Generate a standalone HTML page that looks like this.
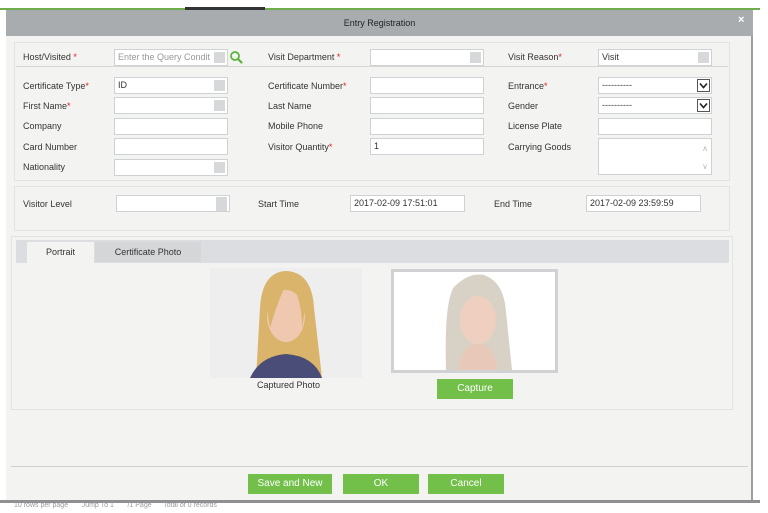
<!DOCTYPE html><html><head><meta charset="utf-8"><style>
*{box-sizing:border-box;margin:0;padding:0}
body{width:768px;height:513px;background:#fff;font-family:"Liberation Sans",sans-serif;font-size:9px;color:#333;position:relative;overflow:hidden}
.a{position:absolute}
.lbl{position:absolute;font-size:9px;color:#333}
.r{color:#e02020}
.in{position:absolute;height:17px;background:#fff;border:1px solid #cfd2d4;font-size:9px;line-height:15px;padding-left:3px}
.dd{position:absolute;right:2px;top:2px;width:11px;height:11px;background:#d6d8da}
.sel .arr{position:absolute;right:1px;top:1px;width:13px;height:13px;border:1px solid #555;background:#fff}
.btn{position:absolute;height:20px;background:#72c04a;color:#fff;font-size:10px;text-align:center;line-height:20px}
</style></head><body>
<div class="a" style="left:0;top:8px;width:760px;height:2px;background:#6fae4c"></div>
<div class="a" style="left:185px;top:7px;width:80px;height:3px;background:#333"></div>
<div class="a" style="left:6px;top:10px;width:747px;height:491px;background:#f3f4f2;border-right:2px solid #9c9ea0"></div>
<div class="a" style="left:6px;top:10px;width:747px;height:26px;background:#a9acaf;color:#222;text-align:center;line-height:26px;font-size:9px">Entry Registration</div>
<div class="a" style="left:738px;top:14px;color:#fff;font-size:11px;font-weight:bold">×</div>
<div class="a" style="left:0;top:500px;width:760px;height:3px;background:#8e9092"></div>
<div class="a" style="left:14px;top:502px;font-size:7px;color:#999">10 rows per page &nbsp;&nbsp;&nbsp;&nbsp;&nbsp; Jump To 1 &nbsp;&nbsp;&nbsp;&nbsp;&nbsp; /1 Page &nbsp;&nbsp;&nbsp;&nbsp; Total of 0 records</div>

<div class="a" style="left:14px;top:42px;width:716px;height:139px;border:1px solid #e3e4e2"></div>
<div class="a" style="left:16px;top:66px;width:712px;height:1px;background:#d5d6d4"></div>
<div class="lbl" style="left:23px;top:52px">Host/Visited <span class="r">*</span></div>
<div class="in" style="left:114px;top:49px;width:114px;color:#999">Enter the Query Condit<div class="dd"></div></div>
<svg class="a" style="left:229px;top:50px" width="14" height="14" viewBox="0 0 14 14"><circle cx="6" cy="6" r="4" fill="none" stroke="#5cb33c" stroke-width="1.8"/><path d="M9 9 L12.5 12.5" stroke="#5cb33c" stroke-width="2.2" stroke-linecap="round"/></svg>
<div class="lbl" style="left:268px;top:52px">Visit Department <span class="r">*</span></div>
<div class="in" style="left:370px;top:49px;width:114px"><div class="dd"></div></div>
<div class="lbl" style="left:508px;top:52px">Visit Reason<span class="r">*</span></div>
<div class="in" style="left:598px;top:49px;width:114px">Visit<div class="dd"></div></div>

<div class="lbl" style="left:23px;top:81px">Certificate Type<span class="r">*</span></div>
<div class="in" style="left:114px;top:77px;width:114px">ID<div class="dd"></div></div>
<div class="lbl" style="left:268px;top:81px">Certificate Number<span class="r">*</span></div>
<div class="in" style="left:370px;top:77px;width:114px"></div>
<div class="lbl" style="left:508px;top:81px">Entrance<span class="r">*</span></div>
<div class="in sel" style="left:598px;top:77px;width:114px">----------<div class="arr"><svg width="11" height="11" viewBox="0 0 11 11"><path d="M2 3.5 L5.5 7.5 L9 3.5" fill="none" stroke="#222" stroke-width="1.6"/></svg></div></div>

<div class="lbl" style="left:23px;top:101px">First Name<span class="r">*</span></div>
<div class="in" style="left:114px;top:97px;width:114px"><div class="dd"></div></div>
<div class="lbl" style="left:268px;top:101px">Last Name</div>
<div class="in" style="left:370px;top:97px;width:114px"></div>
<div class="lbl" style="left:508px;top:101px">Gender</div>
<div class="in sel" style="left:598px;top:97px;width:114px">----------<div class="arr"><svg width="11" height="11" viewBox="0 0 11 11"><path d="M2 3.5 L5.5 7.5 L9 3.5" fill="none" stroke="#222" stroke-width="1.6"/></svg></div></div>

<div class="lbl" style="left:23px;top:121px">Company</div>
<div class="in" style="left:114px;top:118px;width:114px"></div>
<div class="lbl" style="left:268px;top:121px">Mobile Phone</div>
<div class="in" style="left:370px;top:118px;width:114px"></div>
<div class="lbl" style="left:508px;top:121px">License Plate</div>
<div class="in" style="left:598px;top:118px;width:114px"></div>

<div class="lbl" style="left:23px;top:142px">Card Number</div>
<div class="in" style="left:114px;top:138px;width:114px"></div>
<div class="lbl" style="left:268px;top:142px">Visitor Quantity<span class="r">*</span></div>
<div class="in" style="left:370px;top:138px;width:114px">1</div>
<div class="lbl" style="left:508px;top:142px">Carrying Goods</div>
<div class="in" style="left:598px;top:138px;width:114px;height:37px"><div class="a" style="right:3px;top:2px;color:#bbb;font-size:8px">&#8743;</div><div class="a" style="right:3px;top:20px;color:#bbb;font-size:8px">&#8744;</div></div>

<div class="lbl" style="left:23px;top:162px">Nationality</div>
<div class="in" style="left:114px;top:159px;width:114px"><div class="dd"></div></div>

<div class="a" style="left:14px;top:186px;width:716px;height:45px;border:1px solid #e3e4e2"></div>
<div class="lbl" style="left:23px;top:199px">Visitor Level</div>
<div class="in" style="left:116px;top:195px;width:114px"><div class="dd" style="height:14px;top:1px"></div></div>
<div class="lbl" style="left:258px;top:199px">Start Time</div>
<div class="in" style="left:350px;top:195px;width:115px">2017-02-09 17:51:01</div>
<div class="lbl" style="left:494px;top:199px">End Time</div>
<div class="in" style="left:586px;top:195px;width:115px">2017-02-09 23:59:59</div>

<div class="a" style="left:11px;top:236px;width:722px;height:174px;border:1px solid #e3e4e2"></div>
<div class="a" style="left:16px;top:240px;width:713px;height:23px;background:#dcdde0"></div>
<div class="a" style="left:27px;top:242px;width:67px;height:22px;background:#f3f4f2;text-align:center;line-height:20px">Portrait</div>
<div class="a" style="left:95px;top:242px;width:106px;height:20px;background:#d5d6d8;text-align:center;line-height:20px">Certificate Photo</div>

<svg class="a" style="left:210px;top:268px" width="152" height="110" viewBox="0 0 152 110">
<rect width="152" height="110" fill="#eeeeee"/>
<path d="M46 110 L50 40 Q52 4 76 3 Q102 4 104 40 L112 110 Z" fill="#d9b46a"/>
<path d="M40 110 Q50 88 76 86 Q104 88 112 110Z" fill="#4a4d78"/>
<ellipse cx="76" cy="48" rx="19" ry="26" fill="#f0c8b0"/>
<path d="M57 40 Q64 12 80 10 Q70 25 60 60Z" fill="#d9b46a"/>
<path d="M95 42 Q90 14 78 10 Q92 28 92 60Z" fill="#d9b46a"/>
</svg>
<div class="lbl" style="left:257px;top:380px">Captured Photo</div>

<div class="a" style="left:391px;top:269px;width:167px;height:104px;border:3px solid #d0d1d3;background:#fff"></div>
<svg class="a" style="left:394px;top:272px" width="161" height="98" viewBox="0 0 161 98">
<path d="M52 98 Q50 30 60 15 Q75 0 90 3 Q110 10 112 40 L118 98Z" fill="#d8d2c6"/>
<ellipse cx="84" cy="48" rx="18" ry="24" fill="#efd0c0"/>
<path d="M64 98 Q70 70 84 72 Q98 70 104 98Z" fill="#e8c8b8"/>
</svg>
<div class="btn" style="left:437px;top:379px;width:76px">Capture</div>

<div class="a" style="left:11px;top:466px;width:737px;height:1px;background:#cfd0ce"></div>
<div class="btn" style="left:248px;top:474px;width:84px">Save and New</div>
<div class="btn" style="left:343px;top:474px;width:76px">OK</div>
<div class="btn" style="left:428px;top:474px;width:76px">Cancel</div>
</body></html>
